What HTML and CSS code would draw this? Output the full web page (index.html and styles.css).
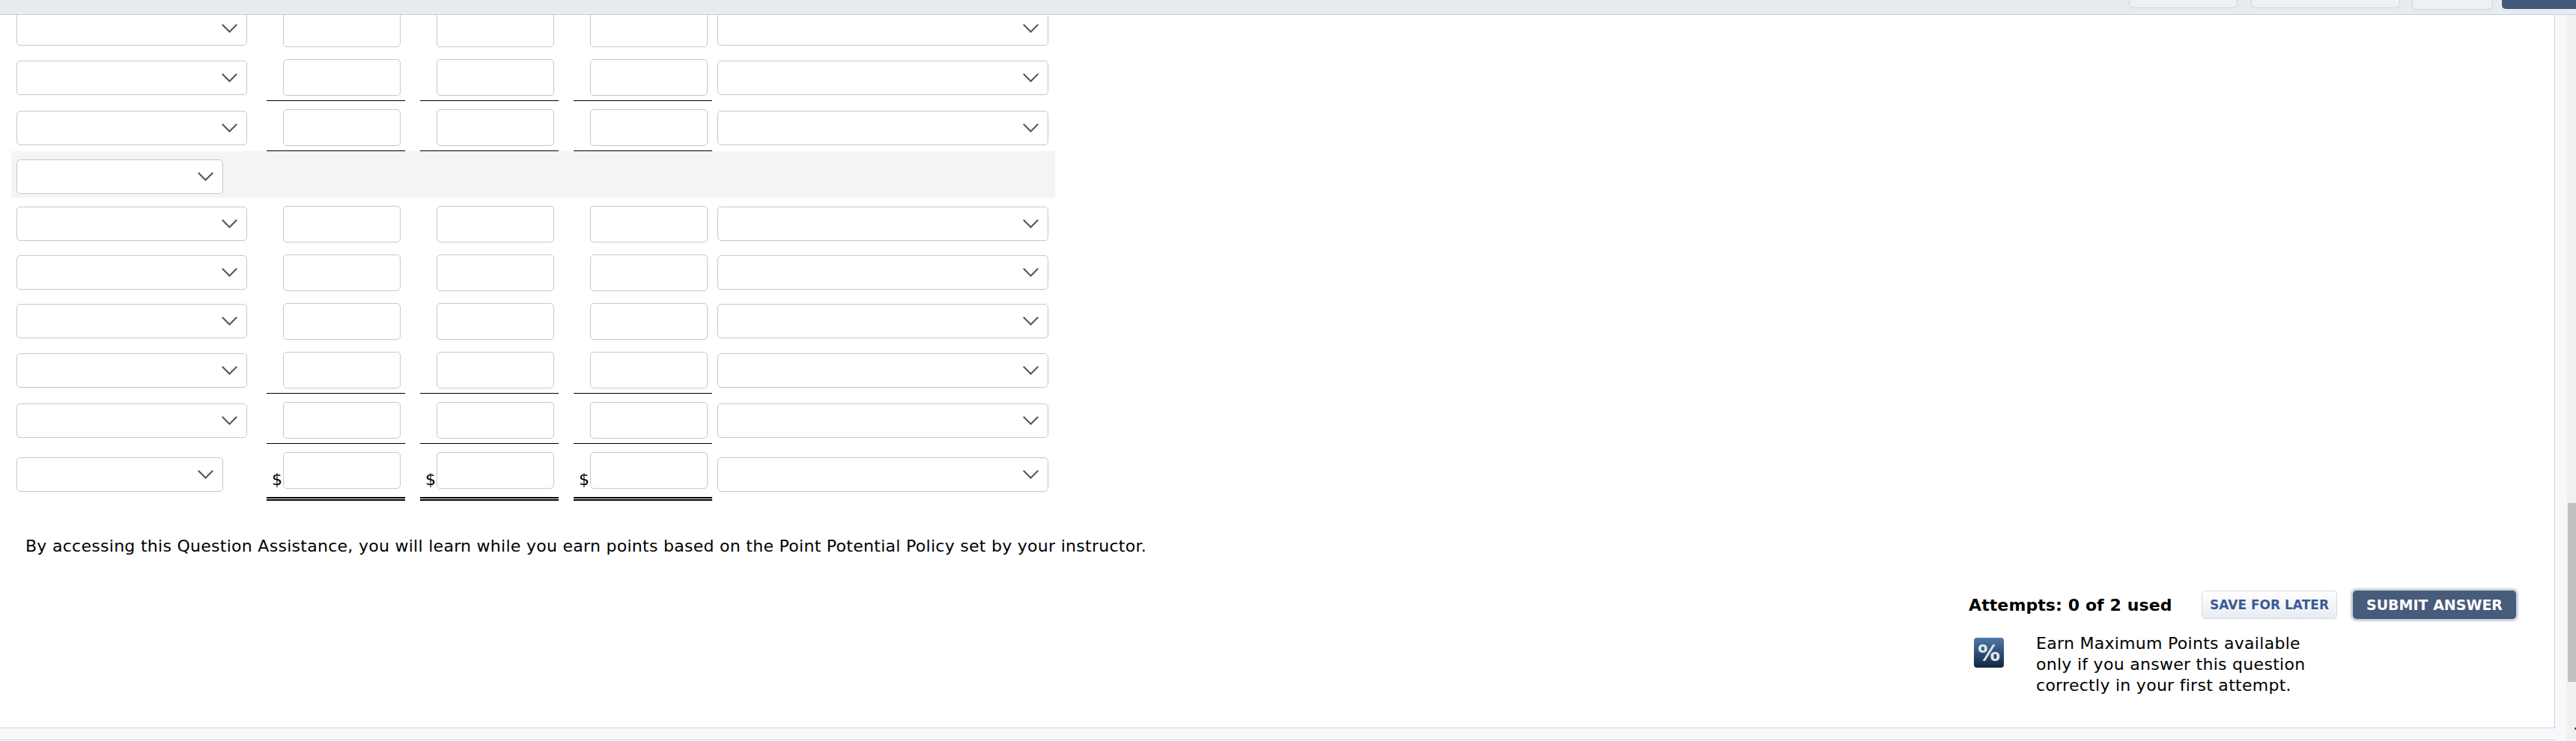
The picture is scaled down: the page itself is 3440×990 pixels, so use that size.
FILE: index.html
```html
<!DOCTYPE html>
<html lang="en">
<head>
<meta charset="utf-8">
<title>Question</title>
<link rel="stylesheet" href="styles.css">
</head>
<body>
<svg class="defs" width="0" height="0" aria-hidden="true"><symbol id="chev" viewBox="0 0 21 12"><path d="M.8.8 10.5 10.5 20.2.8" fill="none" stroke="#555" stroke-width="2"/></symbol></svg>
<header class="topbar">
  <span class="tb tb-a"></span><span class="tb tb-b"></span><span class="tb tb-c"></span><span class="tb tb-d"></span>
</header>
<div class="view">
  <div class="col">
    <main class="panel">
      <div class="sheet">
        <div class="row"><div class="name"><div class="sel"><svg class="chev"><use href="#chev"/></svg></div></div><div class="amt"><input class="box"></div><div class="amt"><input class="box"></div><div class="amt"><input class="box"></div><div class="kind"><div class="sel wide"><svg class="chev"><use href="#chev"/></svg></div></div></div>
        <div class="row sub"><div class="name"><div class="sel"><svg class="chev"><use href="#chev"/></svg></div></div><div class="amt"><input class="box"></div><div class="amt"><input class="box"></div><div class="amt"><input class="box"></div><div class="kind"><div class="sel wide"><svg class="chev"><use href="#chev"/></svg></div></div></div>
        <div class="row sub"><div class="name"><div class="sel"><svg class="chev"><use href="#chev"/></svg></div></div><div class="amt"><input class="box"></div><div class="amt"><input class="box"></div><div class="amt"><input class="box"></div><div class="kind"><div class="sel wide"><svg class="chev"><use href="#chev"/></svg></div></div></div>
        <div class="band"><div class="sel short"><svg class="chev"><use href="#chev"/></svg></div></div>
        <div class="row"><div class="name"><div class="sel"><svg class="chev"><use href="#chev"/></svg></div></div><div class="amt"><input class="box"></div><div class="amt"><input class="box"></div><div class="amt"><input class="box"></div><div class="kind"><div class="sel wide"><svg class="chev"><use href="#chev"/></svg></div></div></div>
        <div class="row"><div class="name"><div class="sel"><svg class="chev"><use href="#chev"/></svg></div></div><div class="amt"><input class="box"></div><div class="amt"><input class="box"></div><div class="amt"><input class="box"></div><div class="kind"><div class="sel wide"><svg class="chev"><use href="#chev"/></svg></div></div></div>
        <div class="row"><div class="name"><div class="sel"><svg class="chev"><use href="#chev"/></svg></div></div><div class="amt"><input class="box"></div><div class="amt"><input class="box"></div><div class="amt"><input class="box"></div><div class="kind"><div class="sel wide"><svg class="chev"><use href="#chev"/></svg></div></div></div>
        <div class="row sub"><div class="name"><div class="sel"><svg class="chev"><use href="#chev"/></svg></div></div><div class="amt"><input class="box"></div><div class="amt"><input class="box"></div><div class="amt"><input class="box"></div><div class="kind"><div class="sel wide"><svg class="chev"><use href="#chev"/></svg></div></div></div>
        <div class="row sub"><div class="name"><div class="sel"><svg class="chev"><use href="#chev"/></svg></div></div><div class="amt"><input class="box"></div><div class="amt"><input class="box"></div><div class="amt"><input class="box"></div><div class="kind"><div class="sel wide"><svg class="chev"><use href="#chev"/></svg></div></div></div>
        <div class="row total"><div class="name"><div class="sel short"><svg class="chev"><use href="#chev"/></svg></div></div><div class="amt"><span class="cur">$</span><input class="box"></div><div class="amt"><span class="cur">$</span><input class="box"></div><div class="amt"><span class="cur">$</span><input class="box"></div><div class="kind"><div class="sel wide"><svg class="chev"><use href="#chev"/></svg></div></div></div>
      </div>
      <p class="policy">By accessing this Question Assistance, you will learn while you earn points based on the Point Potential Policy set by your instructor.</p>
      <section class="assist">
        <div class="actions">
          <strong class="attempts">Attempts: 0 of 2 used</strong>
          <button class="btn save">SAVE FOR LATER</button>
          <button class="btn submit">SUBMIT ANSWER</button>
        </div>
        <div class="earn">
          <span class="pct">%</span>
          <p class="note">Earn Maximum Points available<br>only if you answer this question<br>correctly in your first attempt.</p>
        </div>
      </section>
    </main>
    <div class="under"></div>
  </div>
  <div class="strip"></div>
  <div class="track"><div class="thumb"></div><span class="arrow"></span></div>
</div>
</body>
</html>
```
FILE: styles.css
```css
* { box-sizing: border-box; }
html, body { margin: 0; padding: 0; }
body {
  width: 3440px; height: 990px; overflow: hidden;
  display: flex; flex-direction: column;
  background: #f7f8fa; color: #000;
  font-family: "DejaVu Sans", Verdana, sans-serif;
}
.defs { position: absolute; }

.topbar {
  height: 20px; flex: none; overflow: hidden;
  display: flex; align-items: flex-start; justify-content: flex-end;
  background: #e7eaef; border-bottom: 1px solid #c8ced8;
}
.tb { display: block; background: #eef0f4; border: 1px solid #cfd6e0; border-top: 0; border-radius: 0 0 6px 6px; }
.tb-a { width: 145px; height: 11px; margin-right: 18px; }
.tb-b { width: 199px; height: 11px; margin-right: 16px; }
.tb-c { width: 108px; height: 13px; margin-right: 12px; }
.tb-d { width: 99px; height: 12px; background: #44597a; border: 0; border-radius: 0 0 0 5px; }

.view { flex: 1; display: flex; min-height: 0; }
.col { width: 3412px; flex: none; display: flex; flex-direction: column; }
.panel {
  height: 953px; flex: none; overflow: hidden;
  background: #fff; border-right: 1px solid #ccd2e0; border-bottom: 1px solid #ccd2e0;
}
.under { height: 2px; margin-top: 15px; background: #fff; border-top: 1px solid #ccd2e0; }
.strip { width: 15px; flex: none; background: #f7f8fa; }
.track { width: 13px; flex: none; position: relative; background: #f1f1f1; padding: 652px 0 0 2px; }
.thumb { width: 11px; height: 239px; background: #c1c1c1; }
.arrow { position: absolute; right: 0; top: 952px; width: 2px; height: 3px; background: #555; }

.sheet { margin: -17px 0 0 15px; width: 1394px; }
.row { display: flex; align-items: flex-start; }
.name { width: 341px; flex: none; padding: 12px 0 0 7px; }
.sub .name, .sub .kind { padding-top: 13px; }
.total .name, .total .kind { padding-top: 18px; }
.amt { width: 185px; flex: none; padding: 11px 6px 5px 22px; display: flex; }
.amt + .amt { margin-left: 20px; }
.sub .amt { padding-bottom: 6px; border-bottom: 1px solid #000; }
.total .amt { padding: 11px 6px 11px 7px; border-bottom: 5px double #000; }
.kind { flex: none; margin-left: 7px; width: 442px; padding-top: 12px; }

.box { display: block; width: 157px; height: 49px; flex: none; margin: 0; padding: 0; background: #fff; border: 1px solid #c8c8c8; border-radius: 5px; }
.sel { width: 308px; height: 46px; display: flex; align-items: center; justify-content: flex-end; padding-right: 12px; background: #fff; border: 1px solid #c8c8c8; border-radius: 5px; }
.sel.short { width: 276px; }
.sel.wide { width: 442px; }
.chev { width: 21px; height: 12px; display: block; }
.band { height: 62px; padding: 11px 0 0 7px; background: #f4f4f4; }
.cur { width: 15px; flex: none; align-self: flex-end; font-size: 22px; line-height: 25px; }

.policy { margin: 47px 0 0 34px; font-size: 22px; line-height: 28px; letter-spacing: .28px; white-space: nowrap; }

.assist { width: 735px; margin: 45px 0 0 2629px; }
.actions { display: flex; align-items: flex-start; }
.attempts { width: 311px; flex: none; margin-top: 1px; font-size: 22px; line-height: 38px; letter-spacing: .1px; white-space: nowrap; }
.btn { height: 38px; flex: none; padding: 0; font-family: inherit; font-weight: 700; border-radius: 5px; white-space: nowrap; }
.save { width: 181px; font-size: 17px; color: #3b5a94; background: linear-gradient(#fff, #e9ebf2); border: 1px solid #d4d9e4; }
.submit { width: 218px; margin-left: 21px; font-size: 19px; color: #fff; background: #475b7a; border: 0; box-shadow: 0 0 2px 3px #ccd3de; }
.earn { display: flex; align-items: flex-start; margin-top: 18px; padding-left: 7px; }
.pct {
  width: 40px; height: 40px; flex: none; margin: 6px 43px 0 0; border-radius: 4px;
  display: flex; align-items: center; justify-content: center;
  color: #dfe6ee; font-size: 30px; font-weight: 700;
  background: linear-gradient(#4f79a9, #0f2740);
}
.note { margin: 0; font-size: 22px; line-height: 28px; letter-spacing: .28px; white-space: nowrap; }
```
